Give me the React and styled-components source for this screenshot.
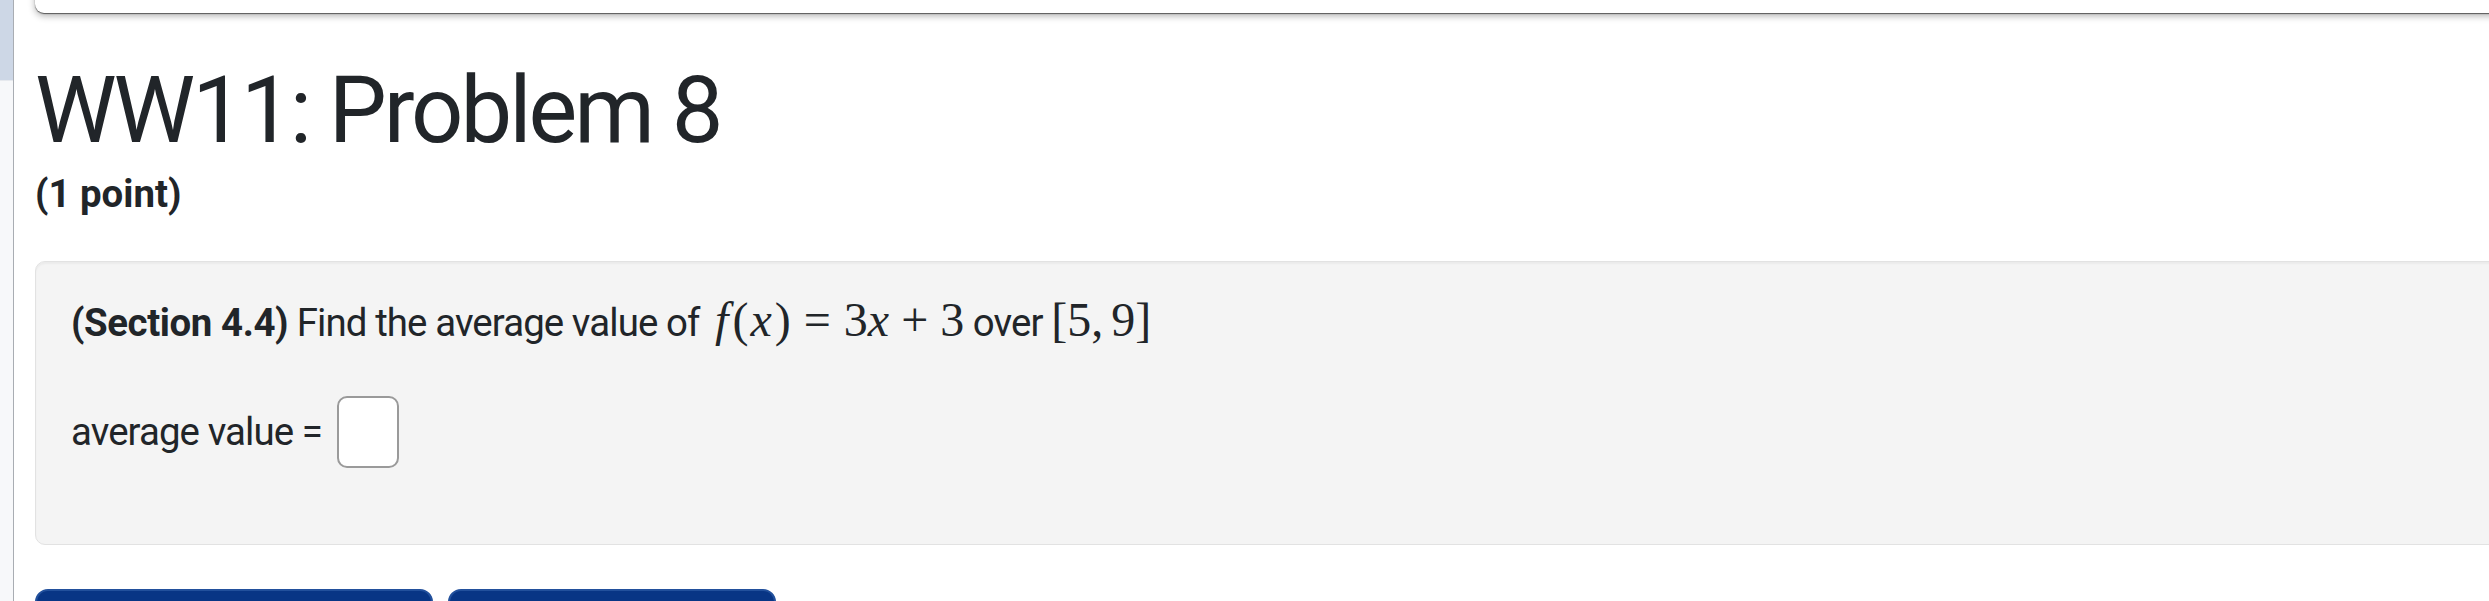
import React from "react";
import styled, { createGlobalStyle } from "styled-components";

const Global = createGlobalStyle`
  html, body { margin: 0; padding: 0; background: #ffffff; overflow: hidden; }
  body { font-family: Roboto, "Noto Sans", sans-serif; color: #212529; }
  #root { width: 2489px; height: 601px; overflow: hidden; }
`;

const Page = styled.div`
  display: flex;
  align-items: stretch;
  height: 601px;
  width: 2489px;
  overflow: hidden;
`;

const Sidebar = styled.aside`
  flex: 0 0 13px;
  display: flex;
  flex-direction: column;
  border-right: 1px solid #a9adb3;
`;

const SideTop = styled.div`
  flex: 0 0 80px;
  background: #cdd7e6;
  border-bottom: 1px solid #e6e9ee;
`;

const SideRest = styled.div`
  flex: 1;
  background: #f7f8fa;
`;

const Main = styled.main`
  flex: 0 0 2700px;
  padding-left: 21px;
  display: block;
`;

const TopCard = styled.div`
  height: 33px;
  margin-top: -20px;
  background: #ffffff;
  border-radius: 9px;
  box-shadow: 0 1px 1px rgba(0, 0, 0, 0.55), 0 3px 7px rgba(0, 0, 0, 0.3);
`;

const Title = styled.h1`
  margin: 44px 0 0 0;
  font-size: 92px;
  line-height: 108px;
  font-weight: 400;
  color: #212529;
  letter-spacing: -3px;
`;

const Points = styled.div`
  font-size: 38.4px;
  line-height: 57.6px;
  font-weight: 700;
`;

const Well = styled.section`
  margin-top: 38px;
  background: #f4f4f4;
  border: 1px solid #e2e2e2;
  border-radius: 10px;
  box-shadow: inset 0 2px 2px rgba(0, 0, 0, 0.04);
  padding: 32px 36px 38px 35px;
  font-size: 38.4px;
  line-height: 57.6px;
  letter-spacing: -0.9px;
`;

const Para = styled.p`
  margin: 0 0 ${(p) => p.$gap || 0}px 0;
  white-space: nowrap;
`;

const Bold = styled.b`
  font-weight: 700;
  letter-spacing: -0.4px;
`;

const MathSpan = styled.span`
  font-family: "Liberation Serif", "DejaVu Serif", serif;
  font-size: 1.25em;
  line-height: 0;
  letter-spacing: 0;
`;

const Var = styled.i`
  font-style: italic;
  margin: 0 ${(p) => p.$mr || 0}px 0 ${(p) => p.$ml || 0}px;
`;

const Op = styled.span`
  display: inline-block;
  margin: 0 ${(p) => p.$space}px;
`;

const ThinSpace = styled.span`
  display: inline-block;
  width: ${(p) => p.$w}px;
`;

const AnswerBox = styled.span`
  display: inline-block;
  vertical-align: -23px;
  width: 58px;
  height: 68px;
  margin-left: 6px;
  background: #ffffff;
  border: 2px solid #9a9a9a;
  border-radius: 10px;
  box-sizing: content-box;
`;

const ButtonRow = styled.div`
  margin-top: 44px;
  display: flex;
  gap: 15px;
`;

const Button = styled.button`
  width: ${(p) => p.$w}px;
  height: 70px;
  background: #083585;
  border: 2px solid #22509c;
  border-radius: 13px;
  padding: 0;
`;

export default function App() {
  return (
    <>
      <Global />
      <Page>
        <Sidebar>
          <SideTop />
          <SideRest />
        </Sidebar>
        <Main>
          <TopCard />
          <Title>WW11: Problem 8</Title>
          <Points>(1 point)</Points>
          <Well>
            <Para $gap={45}>
              <Bold>(Section 4.4)</Bold> Find the average value of{" "}
              <MathSpan>
                <Var $ml={7} $mr={4}>f</Var>(<Var $ml={2} $mr={3}>x</Var>)<Op $space={13}>=</Op>3<Var>x</Var>
                <Op $space={12}>+</Op>3
              </MathSpan>{" "}
              over{" "}
              <MathSpan>
                [5,<ThinSpace $w={8} />9]
              </MathSpan>
            </Para>
            <Para $gap={38}>
              average value = <AnswerBox role="textbox" aria-label="average value" />
            </Para>
          </Well>
          <ButtonRow>
            <Button $w={398} aria-label="Preview My Answers" />
            <Button $w={328} aria-label="Submit Answers" />
          </ButtonRow>
        </Main>
      </Page>
    </>
  );
}
